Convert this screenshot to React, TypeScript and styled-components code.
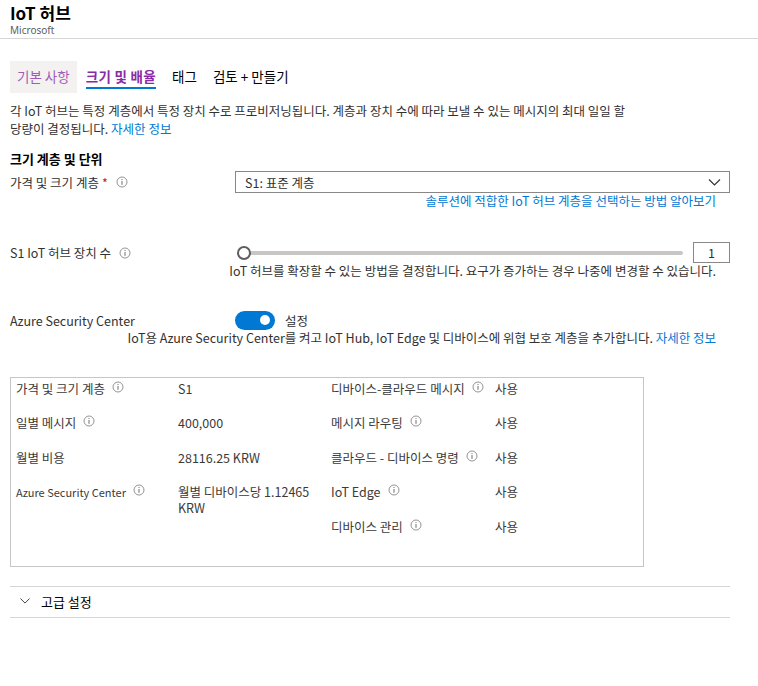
import React from 'react';
import styled, { createGlobalStyle } from 'styled-components';

const Global = createGlobalStyle`
  html, body { margin: 0; padding: 0; background: #fff; }
  body {
    font-family: "Noto Sans CJK KR", "Noto Sans", sans-serif;
    color: #323130;
    font-size: 12.5px;
  }
  * { box-sizing: border-box; }
`;

const Header = styled.header`
  height: 39px;
  border-bottom: 1px solid #d6d6d6;
  padding: 2px 10px 0;
  display: flex;
  flex-direction: column;
`;

const Title = styled.h1`
  margin: 0;
  font-size: 17px;
  font-weight: 600;
  line-height: 22px;
  color: #000;
`;

const Subtitle = styled.div`
  font-family: "Noto Sans", sans-serif;
  font-size: 10px;
  line-height: 13px;
  color: #605e5c;
`;

const Main = styled.main`
  padding: 22px 10px 0;
  width: 740px;
`;

const Tabs = styled.nav`
  display: flex;
  gap: 2px;
  height: 32px;
`;

const Tab = styled.div<{ $visited?: boolean; $active?: boolean }>`
  position: relative;
  display: flex;
  align-items: center;
  padding: 0 7px 2px;
  font-size: 13.5px;
  background: ${(p) => (p.$visited ? '#f3f2f1' : 'transparent')};
  color: ${(p) => (p.$active ? '#8a2ba6' : p.$visited ? '#a05ab8' : '#000')};
  font-weight: ${(p) => (p.$active ? 600 : 400)};
  letter-spacing: ${(p) => (p.$active ? '0.3px' : '0')};
  &::after {
    content: '';
    display: ${(p) => (p.$active ? 'block' : 'none')};
    position: absolute;
    left: 7px;
    right: 7px;
    bottom: 4px;
    height: 2px;
    background: #0078d4;
  }
`;

const Description = styled.p`
  margin: 9px 0 0;
  line-height: 18px;
`;

const Link = styled.a`
  color: #0078d4;
  text-decoration: none;
`;

const SectionTitle = styled.h2`
  margin: 11px 0 0;
  font-size: 13px;
  font-weight: 600;
  line-height: 19px;
  color: #000;
`;

const FieldRow = styled.div<{ $top: number; $h: number }>`
  display: grid;
  grid-template-columns: 225px 1fr;
  align-items: center;
  margin-top: ${(p) => p.$top}px;
  height: ${(p) => p.$h}px;
`;

const Label = styled.div`
  display: flex;
  align-items: center;
  gap: 8px;
  color: #323130;
`;

const Required = styled.span`
  color: #a4262c;
  margin-left: -5px;
`;

const Select = styled.div`
  display: flex;
  align-items: center;
  justify-content: space-between;
  height: 22px;
  border: 1px solid #8a8886;
  padding: 0 8px 0 9px;
  color: #323130;
`;

const HelpLine = styled.div`
  text-align: right;
  padding-right: 14px;
  line-height: 16px;
`;

const SliderWrap = styled.div`
  display: flex;
  align-items: center;
  gap: 10px;
`;

const Track = styled.div`
  position: relative;
  flex: 1;
  height: 4px;
  margin-left: 9px;
  background: #c8c6c4;
  border-radius: 2px;
`;

const Thumb = styled.div`
  position: absolute;
  left: -7px;
  top: -5px;
  width: 14px;
  height: 14px;
  border-radius: 50%;
  border: 2px solid #605e5c;
  background: #fff;
`;

const NumberBox = styled.div`
  width: 37px;
  height: 21px;
  border: 1px solid #8a8886;
  display: flex;
  align-items: center;
  justify-content: center;
  color: #323130;
`;

const ToggleWrap = styled.div`
  display: flex;
  align-items: center;
  gap: 10px;
`;

const Toggle = styled.div`
  width: 40px;
  height: 19px;
  border-radius: 10px;
  background: #0078d4;
  display: flex;
  align-items: center;
  justify-content: flex-end;
  padding-right: 5px;
  &::after {
    content: '';
    width: 10px;
    height: 10px;
    border-radius: 50%;
    background: #fff;
  }
`;

const SummaryBox = styled.div`
  margin-top: 31px;
  width: 634px;
  height: 190px;
  border: 1px solid #c8c6c4;
  padding: 3px 5px;
  display: grid;
  grid-template-columns: 162px 153px 164px 1fr;
  grid-auto-rows: 34.4px;
  align-items: start;
`;

const Cell = styled.div<{ $small?: boolean }>`
  display: flex;
  align-items: flex-start;
  gap: 7px;
  line-height: 16px;
  font-size: ${(p) => (p.$small ? '11px' : '12.5px')};
  color: #3b3a39;
`;

const Advanced = styled.div`
  margin-top: 19px;
  height: 32px;
  border-top: 1px solid #d6d6d6;
  border-bottom: 1px solid #d6d6d6;
  display: flex;
  align-items: center;
  gap: 11px;
  padding: 0 0 2px 10px;
  font-size: 13px;
  color: #000;
`;

const InfoIcon = () => (
  <svg width="12" height="12" viewBox="0 0 12 12" style={{ flex: 'none' }}>
    <circle cx="6" cy="6" r="5" fill="none" stroke="#8a8886" strokeWidth="0.9" />
    <line x1="6" y1="5" x2="6" y2="8.8" stroke="#605e5c" strokeWidth="0.9" />
    <circle cx="6" cy="3.5" r="0.55" fill="#605e5c" />
  </svg>
);

const Chevron = ({ w = 12, h = 7 }: { w?: number; h?: number }) => (
  <svg width={w} height={h} viewBox="0 0 12 7" style={{ flex: 'none' }}>
    <polyline points="0.5,0.5 6,6 11.5,0.5" fill="none" stroke="#323130" strokeWidth="1.1" />
  </svg>
);

const summary: [React.ReactNode, boolean, React.ReactNode, string, boolean][] = [
  ['가격 및 크기 계층', true, 'S1', '디바이스-클라우드 메시지', true],
  ['일별 메시지', true, '400,000', '메시지 라우팅', true],
  ['월별 비용', false, '28116.25 KRW', '클라우드 - 디바이스 명령', true],
  ['Azure Security Center', true, '월별 디바이스당 1.12465 KRW', 'IoT Edge', true],
  [null, false, null, '디바이스 관리', true],
];

export default function App() {
  return (
    <>
      <Global />
      <Header>
        <Title>IoT 허브</Title>
        <Subtitle>Microsoft</Subtitle>
      </Header>
      <Main>
        <Tabs>
          <Tab $visited>기본 사항</Tab>
          <Tab $active>크기 및 배율</Tab>
          <Tab>태그</Tab>
          <Tab>검토 + 만들기</Tab>
        </Tabs>
        <Description>
          각 IoT 허브는 특정 계층에서 특정 장치 수로 프로비저닝됩니다. 계층과 장치 수에 따라 보낼 수 있는 메시지의 최대 일일 할
          <br />
          당량이 결정됩니다. <Link href="#">자세한 정보</Link>
        </Description>
        <SectionTitle>크기 계층 및 단위</SectionTitle>
        <FieldRow $top={3} $h={22}>
          <Label>
            <span>가격 및 크기 계층</span>
            <Required>*</Required>
            <InfoIcon />
          </Label>
          <Select>
            <span>S1: 표준 계층</span>
            <Chevron w={13} h={7} />
          </Select>
        </FieldRow>
        <HelpLine>
          <Link href="#">솔루션에 적합한 IoT 허브 계층을 선택하는 방법 알아보기</Link>
        </HelpLine>
        <FieldRow $top={33} $h={21}>
          <Label>
            <span>S1 IoT 허브 장치 수</span>
            <InfoIcon />
          </Label>
          <SliderWrap>
            <Track>
              <Thumb />
            </Track>
            <NumberBox>1</NumberBox>
          </SliderWrap>
        </FieldRow>
        <HelpLine>IoT 허브를 확장할 수 있는 방법을 결정합니다. 요구가 증가하는 경우 나중에 변경할 수 있습니다.</HelpLine>
        <FieldRow $top={31} $h={20}>
          <Label>
            <span>Azure Security Center</span>
          </Label>
          <ToggleWrap>
            <Toggle />
            <span>설정</span>
          </ToggleWrap>
        </FieldRow>
        <HelpLine>
          IoT용 Azure Security Center를 켜고 IoT Hub, IoT Edge 및 디바이스에 위협 보호 계층을 추가합니다.{' '}
          <Link href="#">자세한 정보</Link>
        </HelpLine>
        <SummaryBox>
          {summary.map(([l1, i1, v1, l2, i2], idx) => (
            <React.Fragment key={idx}>
              <Cell $small={l1 === 'Azure Security Center'}>
                {l1 && <span>{l1}</span>}
                {l1 && i1 && <InfoIcon />}
              </Cell>
              <Cell>{v1}</Cell>
              <Cell>
                <span>{l2}</span>
                {i2 && <InfoIcon />}
              </Cell>
              <Cell>사용</Cell>
            </React.Fragment>
          ))}
        </SummaryBox>
        <Advanced>
          <Chevron w={10} h={6} />
          <span>고급 설정</span>
        </Advanced>
      </Main>
    </>
  );
}
